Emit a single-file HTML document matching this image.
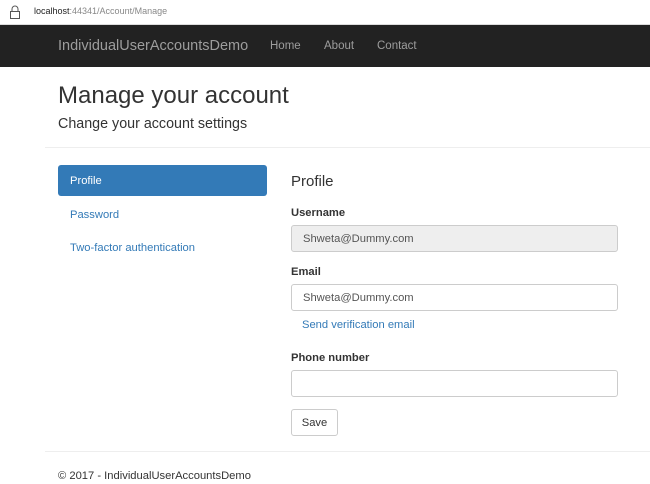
<!DOCTYPE html>
<html><head><style>
*{box-sizing:border-box;margin:0;padding:0}
body{width:650px;height:484px;overflow:hidden;background:#fff;font-family:"Liberation Sans",sans-serif;color:#333;position:relative}
.a{position:absolute;white-space:nowrap}
.inp{position:absolute;left:291px;width:327px;height:27px;border:1px solid #ccc;border-radius:3px;font-size:11.2px;padding:7px 11px;color:#555}
.lbl{font-size:11.2px;font-weight:bold;color:#333}
.lnk{color:#337ab7;font-size:11.2px}
</style></head><body>
<div class="a" style="left:0;top:0;width:650px;height:25px;background:#fff;border-bottom:1px solid #ddd"></div>
<svg class="a" style="left:9px;top:5px" width="12" height="14" viewBox="0 0 12 14"><path d="M3 6V4a3 3 0 0 1 6 0v2" fill="none" stroke="#555" stroke-width="1"/><rect x="1.5" y="6.5" width="9" height="7" fill="none" stroke="#555"/></svg>
<div class="a" style="left:34px;top:6px;font-size:9px;color:#222">localhost<span style="color:#888">:44341/Account/Manage</span></div>
<div class="a" style="left:0;top:25px;width:650px;height:42px;background:#222"></div>
<div class="a" style="left:58px;top:38px;font-size:14.5px;color:#9d9d9d">IndividualUserAccountsDemo</div>
<div class="a" style="left:270px;top:40px;font-size:11.5px;color:#9d9d9d">Home</div>
<div class="a" style="left:324px;top:40px;font-size:11.5px;color:#9d9d9d">About</div>
<div class="a" style="left:377px;top:40px;font-size:11.5px;color:#9d9d9d">Contact</div>
<div class="a" style="left:58px;top:82px;font-size:24px;color:#333">Manage your account</div>
<div class="a" style="left:58px;top:116px;font-size:14.3px;color:#333">Change your account settings</div>
<div class="a" style="left:45px;top:147px;width:605px;height:1px;background:#eee"></div>
<div class="a" style="left:58px;top:165px;width:209px;height:31px;background:#337ab7;border-radius:3px"></div>
<div class="a" style="left:70px;top:175px;font-size:11.2px;color:#fff">Profile</div>
<div class="a lnk" style="left:70px;top:209px">Password</div>
<div class="a lnk" style="left:70px;top:242px">Two-factor authentication</div>
<div class="a" style="left:291px;top:173px;font-size:15px;color:#333">Profile</div>
<div class="a lbl" style="left:291px;top:207px">Username</div>
<div class="inp" style="top:225px;background:#eee">Shweta@Dummy.com</div>
<div class="a lbl" style="left:291px;top:266px">Email</div>
<div class="inp" style="top:284px">Shweta@Dummy.com</div>
<div class="a lnk" style="left:302px;top:319px">Send verification email</div>
<div class="a lbl" style="left:291px;top:352px">Phone number</div>
<div class="inp" style="top:370px"></div>
<div class="a" style="left:291px;top:409px;width:47px;height:27px;border:1px solid #ccc;border-radius:3px;font-size:11.2px;text-align:center;line-height:26px">Save</div>
<div class="a" style="left:45px;top:451px;width:605px;height:1px;background:#eee"></div>
<div class="a" style="left:58px;top:470px;font-size:11.2px;color:#333">© 2017 - IndividualUserAccountsDemo</div>
</body></html>
